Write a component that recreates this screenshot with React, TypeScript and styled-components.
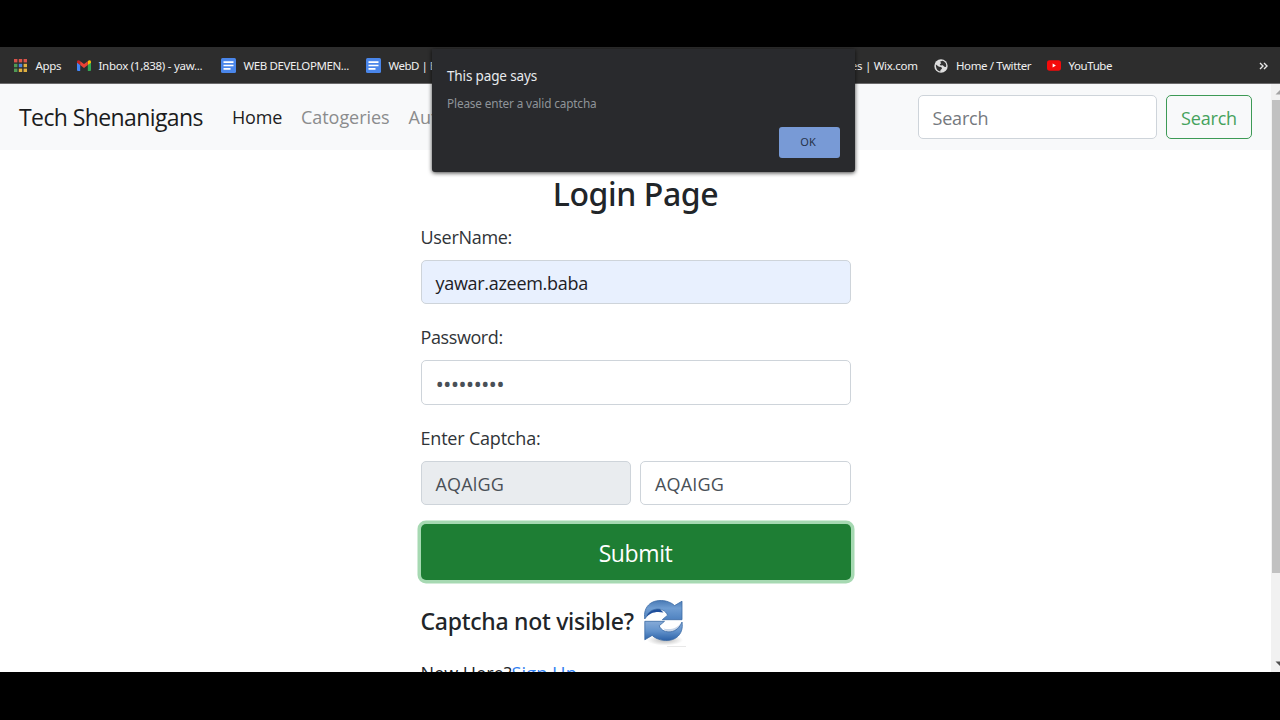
import React from "react";
import styled, { createGlobalStyle } from "styled-components";

const GlobalStyle = createGlobalStyle`
  * { box-sizing: border-box; }
  body { margin: 0; background: #000; }
`;

const sans = `"Open Sans", "Noto Sans", sans-serif`;
const noto = `"Noto Sans", "Open Sans", sans-serif`;

const Screen = styled.div`
  width: 1280px;
  height: 720px;
  padding: 47px 0 48px;
  background: #000;
  overflow: hidden;
  font-family: ${sans};
  position: relative;
`;

const Browser = styled.div`
  height: 625px;
  display: flex;
  flex-direction: column;
  overflow: hidden;
`;

const BookmarksBar = styled.div`
  flex: none;
  height: 37px;
  display: flex;
  align-items: center;
  background: #2d2d2d;
  border-bottom: 1px solid #6b6a6b;
  padding: 1px 10px 0 13.5px;
  color: #f0f0f0;
  font: 11.5px ${noto};
`;

const Bookmark = styled.div<{ $width: number; $gap: number }>`
  flex: none;
  display: flex;
  align-items: center;
  gap: ${(p) => p.$gap}px;
  width: ${(p) => p.$width}px;
  white-space: nowrap;
  overflow: hidden;

  svg { flex: none; display: block; }
`;

const Label = styled.span<{ $track?: number; $size?: number }>`
  font-size: ${(p) => (p.$size ? `${p.$size}px` : "inherit")};
  letter-spacing: ${(p) => p.$track ?? 0}px;
  white-space: pre;
`;

const Viewport = styled.div`
  flex: 1;
  min-height: 0;
  display: flex;
  background: #fff;
`;

const Page = styled.div`
  flex: 1;
  min-width: 0;
  overflow: hidden;
`;

const Scrollbar = styled.div`
  flex: none;
  width: 9px;
  padding-left: 1px;
  background: #f1f1f1;
  display: flex;
  flex-direction: column;
  justify-content: space-between;
  overflow: hidden;
`;

const Thumb = styled.div`
  height: 473px;
  background: #c1c1c1;
  margin-bottom: auto;
`;

const ScrollButton = styled.div`
  height: 16px;
  svg { display: block; }
`;

const Navbar = styled.nav`
  height: 66px;
  display: flex;
  align-items: center;
  padding: 0 19px;
  background: #f8f9fa;
  color: #212529;
`;

const Brand = styled.div`
  flex: none;
  width: 213px;
  font-size: 23px;
  letter-spacing: -0.6px;
  color: #1b1c1d;
`;

const NavLink = styled.div<{ $active?: boolean; $width: number; $track?: number }>`
  flex: none;
  width: ${(p) => p.$width}px;
  font-size: 18px;
  letter-spacing: ${(p) => p.$track ?? 0}px;
  color: ${(p) => (p.$active ? "#1d1e1f" : "#8b8c8d")};
`;

const SearchForm = styled.div`
  margin-left: auto;
  display: flex;
  gap: 9px;
`;

const Field = styled.div<{ $bg?: string; $color?: string; $width?: number }>`
  flex: ${(p) => (p.$width ? "none" : 1)};
  width: ${(p) => (p.$width ? `${p.$width}px` : "auto")};
  height: 44.5px;
  display: flex;
  align-items: center;
  padding: 2px 14px 0;
  border: 1px solid #ced4da;
  border-radius: 5px;
  background: ${(p) => p.$bg ?? "#fff"};
  color: ${(p) => p.$color ?? "#495057"};
  font-size: 18px;
`;

const SearchButton = styled.div`
  width: 86px;
  height: 44.5px;
  display: flex;
  align-items: center;
  justify-content: center;
  padding-top: 1px;
  border: 1px solid #3d9a55;
  border-radius: 5px;
  color: #45a25c;
  font-size: 18px;
  letter-spacing: -0.2px;
`;

const Form = styled.main`
  width: 430px;
  margin: 0 auto;
  padding-top: 24px;
  color: #212529;
`;

const Title = styled.h1`
  margin: 0;
  text-align: center;
  font: 500 32px/40px ${noto};
  letter-spacing: -0.4px;
`;

const FieldLabel = styled.div<{ $track: number }>`
  height: 28px;
  line-height: 28px;
  margin-bottom: 9px;
  font-size: 18px;
  letter-spacing: ${(p) => p.$track}px;
  color: #303438;
`;

const Group = styled.div<{ $top: number }>`
  margin-top: ${(p) => p.$top}px;
`;

const FieldRow = styled.div`
  display: flex;
  gap: 9px;
`;

const Submit = styled.div`
  margin-top: 18.5px;
  height: 56px;
  display: flex;
  align-items: center;
  justify-content: center;
  padding-top: 2px;
  border-radius: 5px;
  background: #1e7e34;
  box-shadow: 0 0 0 3.5px #a6d9b2;
  color: #fff;
  font-size: 23px;
  letter-spacing: -0.4px;
`;

const CaptchaHelp = styled.div`
  margin-top: 18px;
  height: 50px;
  display: flex;
  align-items: flex-start;
  gap: 10px;
  font: 500 23px/46px ${noto};
  letter-spacing: -0.27px;
  svg { display: block; margin-top: 2px; }
`;

const SignUp = styled.div`
  margin-top: 11px;
  line-height: 28px;
  font-size: 18px;
  color: #212529;
`;

const Link = styled.span`
  color: #2f7df0;
  letter-spacing: 0.2px;
`;

const Dialog = styled.div`
  position: absolute;
  left: 432px;
  top: 49px;
  width: 422.5px;
  height: 123px;
  padding: 17px 15px 14.5px;
  display: flex;
  flex-direction: column;
  background: #292a2d;
  border-radius: 0 0 3px 3px;
  box-shadow: 0 1px 4px rgba(0, 0, 0, 0.75);
  font-family: ${noto};
`;

const DialogTitle = styled.div`
  font-size: 13.5px;
  line-height: 20px;
  letter-spacing: -0.14px;
  color: #e8eaed;
`;

const DialogText = styled.div`
  margin-top: 8px;
  font-size: 11.8px;
  line-height: 18px;
  letter-spacing: -0.15px;
  color: #8f9499;
`;

const DialogButton = styled.div`
  align-self: flex-end;
  margin-top: auto;
  width: 61px;
  height: 31px;
  display: flex;
  align-items: center;
  justify-content: center;
  padding: 0 2px 2px 0;
  border-radius: 3px;
  background: #789ad6;
  color: #26334a;
  font-size: 11px;
`;

const appColors = ["#d9534a", "#d9534a", "#d9534a", "#4f9a55", "#4a83dc", "#e0b040", "#4f9a55", "#e0b040", "#e0b040"];

const AppsIcon = () => (
  <svg width="13" height="13" viewBox="0 0 13 13">
    {appColors.map((c, i) => (
      <rect key={i} x={(i % 3) * 4.8} y={Math.floor(i / 3) * 4.8} width="3.400" height="3.400" fill={c} />
    ))}
  </svg>
);

const GmailIcon = () => (
  <svg width="14" height="11" viewBox="0 0 14 11">
    <path d="M0 2v8q0 1 1 1h2.2V4.8z" fill="#4285f4" />
    <path d="M14 2v8q0 1-1 1h-2.2V4.8z" fill="#34a853" />
    <path d="M10.800 1.200v3.900L14 2.700V1.500q-.7-2-2.400-.9z" fill="#fbbc04" />
    <path d="M0 1.500v1.200l3.200 2.400V1.200L2.400.6Q.7-.4 0 1.500z" fill="#c5221f" />
    <path d="M3.200 1.200v3.900L7 8l3.800-2.900V1.200L7 4z" fill="#ea4335" />
  </svg>
);

const DocsIcon = () => (
  <svg width="15" height="15" viewBox="0 0 15 15">
    <rect width="15" height="15" rx="1.500" fill="#4a86ea" />
    <path d="M2.500 4.200h10M2.500 7.500h10M2.500 10.800h7" stroke="#fff" strokeWidth="1.700" />
  </svg>
);

const GlobeIcon = () => (
  <svg width="14" height="14" viewBox="0 0 14 14">
    <circle cx="7" cy="7" r="6.700" fill="#dedede" />
    <path d="M1.900 5.600 5 7.800l2.300.3.700 1.600-1.600 1.300v1.400C3.600 12.300 1.700 9.800 1.900 5.600zM6.200 2.500 8.600 1.700c1.500.4 2.800 1.600 3.400 3.100.4 1.200.3 2.300 0 3.300l-1.700-.4L8.800 6.300l-2.200.1-.9-1.300 1.500-.6z" fill="#333" />
  </svg>
);

const YouTubeIcon = () => (
  <svg width="14" height="11" viewBox="0 0 14 11">
    <rect y=".3" width="14" height="10.400" rx="2.600" fill="#f50a0a" />
    <path d="M5.600 3.500v4l3.300-2z" fill="#fff" />
  </svg>
);

const arrow =
  "M.8 19C-.3 12.500 1.700 7 6 3.700 11-.1 18.500-.3 24.500 1.900 27 2.800 29 4 30.600 5.600L38 1.200V19.700H18.300l5.300-4.500C21.500 10.500 17 8.600 12 9.200 7 9.900 3 13.500.8 19z";

const RefreshIcon = () => (
  <svg width="44" height="48" viewBox="0 0 44 48">
    <defs>
      <linearGradient id="blueTop" x1="0" y1="0" x2="0" y2="1">
        <stop offset="0" stopColor="#4a7ab5" />
        <stop offset=".4" stopColor="#6f9dd2" />
        <stop offset="1" stopColor="#4f82c0" />
      </linearGradient>
      <linearGradient id="blueBottom" x1="0" y1="1" x2="0" y2="0">
        <stop offset="0" stopColor="#86abd8" />
        <stop offset=".5" stopColor="#6292cb" />
        <stop offset="1" stopColor="#2c62a8" />
      </linearGradient>
      <radialGradient id="shade">
        <stop offset="0" stopColor="#888" stopOpacity=".6" />
        <stop offset="1" stopColor="#888" stopOpacity="0" />
      </radialGradient>
    </defs>
    <ellipse cx="21" cy="40" rx="18" ry="5.500" fill="url(#shade)" />
    <path d="M23 46.500h19" stroke="#e8e8e8" strokeWidth="1" />
    <path d="M1.500 18.500C5.500 12.500 12 11 19.500 12.500L14 7 5 10z" fill="#1f4f9c" />
    <path d={arrow} fill="url(#blueTop)" stroke="#3a6aa5" strokeWidth=".8" />
    <g transform="rotate(180 19.400 20.500)">
      <path d="M1.500 18.500C5.500 12.500 12 11 19.500 12.500L14 7 5 10z" fill="#c9d6e8" />
      <path d={arrow} fill="url(#blueBottom)" stroke="#3a6aa5" strokeWidth=".8" />
    </g>
  </svg>
);

export default function App() {
  return (
    <Screen>
      <GlobalStyle />
      <Browser>
        <BookmarksBar>
          <Bookmark $width={63} $gap={9}>
            <AppsIcon />
            <Label $track={-0.3}>Apps</Label>
          </Bookmark>
          <Bookmark $width={144.5} $gap={8}>
            <GmailIcon />
            <Label $track={-0.28}>Inbox (1,838) - yaw...</Label>
          </Bookmark>
          <Bookmark $width={145} $gap={7.5}>
            <DocsIcon />
            <Label $track={-0.4}>WEB DEVELOPMEN...</Label>
          </Bookmark>
          <Bookmark $width={481} $gap={7.5}>
            <DocsIcon />
            <Label $track={-0.5}>WebD | E</Label>
          </Bookmark>
          <Bookmark $width={86.500} $gap={0}>
            <Label $track={-0.3}>tes | Wix.com</Label>
          </Bookmark>
          <Bookmark $width={113} $gap={8.5}>
            <GlobeIcon />
            <Label $track={-0.4}>Home / Twitter</Label>
          </Bookmark>
          <Bookmark $width={212.500} $gap={8}>
            <YouTubeIcon />
            <Label $track={-0.42}>YouTube</Label>
          </Bookmark>
          <svg width="9" height="8" viewBox="0 0 9 8" fill="none" stroke="#e8e8e8" strokeWidth="1.400">
            <path d="M1 1l3 3-3 3M5 1l3 3-3 3" />
          </svg>
        </BookmarksBar>
        <Viewport>
          <Page>
            <Navbar>
              <Brand>Tech Shenanigans</Brand>
              <NavLink $active $width={69} $track={-0.2}>Home</NavLink>
              <NavLink $width={107.5} $track={-0.05}>Catogeries</NavLink>
              <NavLink $width={60}>Author</NavLink>
              <SearchForm>
                <Field $width={239.500} $color="#75797e">
                  <Label $track={-0.2}>Search</Label>
                </Field>
                <SearchButton>Search</SearchButton>
              </SearchForm>
            </Navbar>
            <Form>
              <Title>Login Page</Title>
              <Group $top={8.5}>
                <FieldLabel $track={-0.3}>UserName:</FieldLabel>
                <FieldRow>
                  <Field $bg="#e8f0fe" $color="#1d2025">
                    <Label $track={-0.3}>yawar.azeem.baba</Label>
                  </Field>
                </FieldRow>
              </Group>
              <Group $top={19}>
                <FieldLabel $track={-0.4}>Password:</FieldLabel>
                <FieldRow>
                  <Field>
                    <Label $track={-0.88} $size={22.5}>•••••••••</Label>
                  </Field>
                </FieldRow>
              </Group>
              <Group $top={19}>
                <FieldLabel $track={-0.2}>Enter Captcha:</FieldLabel>
                <FieldRow>
                  <Field $bg="#e9ecef">
                    <Label $track={0.15}>AQAlGG</Label>
                  </Field>
                  <Field>
                    <Label $track={0.15}>AQAIGG</Label>
                  </Field>
                </FieldRow>
              </Group>
              <Submit>Submit</Submit>
              <CaptchaHelp>
                Captcha not visible?
                <RefreshIcon />
              </CaptchaHelp>
              <SignUp>
                New Here?<Link>Sign Up</Link>
              </SignUp>
            </Form>
          </Page>
          <Scrollbar>
            <ScrollButton>
              <svg width="17" height="16" viewBox="0 0 17 16"><path d="M3.500 10.500 8 6l4.500 4.500z" fill="#a3a3a3" /></svg>
            </ScrollButton>
            <Thumb />
            <ScrollButton>
              <svg width="17" height="16" viewBox="0 0 17 16"><path d="M3.500 5.500 8 10l4.500-4.500z" fill="#505050" /></svg>
            </ScrollButton>
          </Scrollbar>
        </Viewport>
      </Browser>
      <Dialog>
        <DialogTitle>This page says</DialogTitle>
        <DialogText>Please enter a valid captcha</DialogText>
        <DialogButton>OK</DialogButton>
      </Dialog>
    </Screen>
  );
}
